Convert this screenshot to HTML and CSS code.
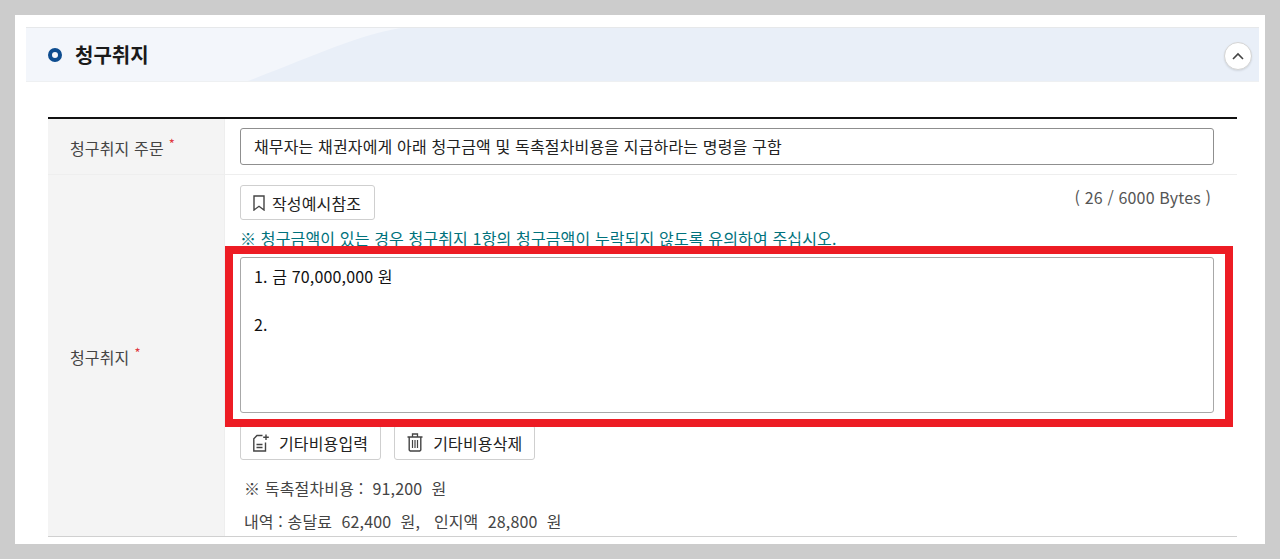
FILE: index.html
```html
<!DOCTYPE html>
<html lang="ko">
<head>
    <meta charset="UTF-8">
    <title>청구취지</title>
    <link rel="stylesheet" href="styles.css">
</head>
<body>
    <main class="card">
        <header class="band">
            <svg class="band-bg" viewBox="0 0 1233 55" preserveAspectRatio="none"><path d="M0 0H375C330 8 290 28 222 55H0Z" fill="#f3f6fb"/></svg>
            <span class="dot"></span>
            <h2>청구취지</h2>
            <button class="fold" aria-label="접기">
                <svg width="14" height="10" viewBox="0 0 14 10"><path d="M2 8L7 3L12 8" fill="none" stroke="#444" stroke-width="1.6"/></svg>
            </button>
        </header>

        <section class="form">
            <div class="row row-first">
                <div class="label">청구취지 주문 <span class="req">*</span></div>
                <div class="field">
                    <div class="input">채무자는 채권자에게 아래 청구금액 및 독촉절차비용을 지급하라는 명령을 구함</div>
                </div>
            </div>
            <div class="row row-main">
                <div class="label">청구취지 <span class="req">*</span></div>
                <div class="field field-main">
                    <div class="top-line">
                        <button class="btn btn-small">
                            <svg width="12" height="16" viewBox="0 0 12 16"><path d="M1 1H11V15L6 11.3L1 15Z" fill="none" stroke="#444" stroke-width="1.4"/></svg>
                            작성예시참조
                        </button>
                        <span class="bytes">( 26 / 6000 Bytes )</span>
                    </div>
                    <p class="notice">※ 청구금액이 있는 경우 청구취지 1항의 청구금액이 누락되지 않도록 유의하여 주십시오.</p>
                    <div class="textarea">
                        <p>1. 금 70,000,000 원</p>
                        <p class="gap">2.</p>
                    </div>
                    <div class="actions">
                        <button class="btn">
                            <svg width="16" height="18" viewBox="0 0 16 18"><path d="M9.5 1.5H4L0.8 4.7V17H12.5V8.5" fill="none" stroke="#444" stroke-width="1.4"/><path d="M13 0.5V6M10.2 3.2H15.8" stroke="#444" stroke-width="1.4"/><path d="M3.5 10.5H9.5M3.5 13.5H9.5" stroke="#444" stroke-width="1.4"/></svg>
                            기타비용입력
                        </button>
                        <button class="btn">
                            <svg width="16" height="19" viewBox="0 0 16 19"><path d="M0.5 4H15.5M5.5 4V1H10.5V4" fill="none" stroke="#444" stroke-width="1.3"/><path d="M2.2 4V17L3.2 18H12.8L13.8 17V4" fill="none" stroke="#444" stroke-width="1.4"/><path d="M5.5 7V15M8 7V15M10.5 7V15" stroke="#444" stroke-width="1.2"/></svg>
                            기타비용삭제
                        </button>
                    </div>
                    <p class="cost">※ 독촉절차비용 :&nbsp; 91,200&nbsp; 원</p>
                    <p class="detail">내역 : 송달료&nbsp; 62,400&nbsp; 원, &nbsp; 인지액&nbsp; 28,800&nbsp; 원</p>
                </div>
            </div>
        </section>

        <div class="highlight"></div>
    </main>
</body>
</html>
```

FILE: styles.css
```css
html, body {
    margin: 0;
    height: 100%;
}
body {
    background-color: #cccccc;
    padding: 15px 15px 15px 15px;
    box-sizing: border-box;
    height: 559px;
    overflow: hidden;
    font-family: "Noto Sans CJK KR", "Noto Sans", sans-serif;
    letter-spacing: 0.15px;
    color: #333;
}
.card {
    position: relative;
    background-color: #fff;
    height: 529px;
    padding: 12px 6px 0 11px;
    box-sizing: border-box;
}
.band {
    position: relative;
    display: flex;
    align-items: center;
    height: 55px;
    background-color: #e9eff8;
    border-top: 1px solid #e6e8ea;
    border-bottom: 1px solid #eef0f2;
    box-sizing: border-box;
    padding-left: 22px;
}
.band-bg {
    position: absolute;
    left: 0;
    top: 0;
    width: 100%;
    height: 100%;
}
.dot {
    position: relative;
    width: 14px;
    height: 14px;
    border: 4px solid #0d4c8f;
    border-radius: 50%;
    box-sizing: border-box;
}
.band h2 {
    position: relative;
    margin: 0 0 0 13px;
    font-size: 20px;
    font-weight: 700;
    letter-spacing: 0;
    color: #1a1a1a;
}
.fold {
    position: absolute;
    right: 7px;
    top: 14px;
    width: 28px;
    height: 28px;
    padding: 0;
    border: 1px solid #d5d5d5;
    border-radius: 50%;
    background-color: #fff;
    box-shadow: 0 1px 2px rgba(0,0,0,0.1);
    display: flex;
    align-items: center;
    justify-content: center;
}
.form {
    margin: 35px 22px 0 22px;
    border-top: 2px solid #111;
    border-bottom: 1px solid #d0d0d0;
}
.row {
    display: flex;
}
.row-first {
    height: 56px;
    border-bottom: 1px solid #eeeeee;
    box-sizing: border-box;
}
.row-main {
    height: 361px;
}
.label {
    width: 177px;
    flex-shrink: 0;
    box-sizing: border-box;
    background-color: #f4f4f4;
    border-right: 1px solid #eeeeee;
    padding-left: 22px;
    padding-top: 2px;
    font-size: 16px;
    color: #444;
    display: flex;
    align-items: center;
    gap: 5px;
}
.req {
    color: #e0393e;
    font-size: 13px;
    position: relative;
    top: -4px;
}
.field {
    flex-grow: 1;
    padding: 9px 23px 0 15px;
}
.input {
    height: 37px;
    box-sizing: border-box;
    border: 1px solid #8f8f8f;
    border-radius: 3px;
    padding: 0 13px;
    line-height: 35px;
    font-size: 16px;
    color: #222;
}
.field-main {
    padding-top: 10px;
}
.top-line {
    display: flex;
    justify-content: space-between;
    align-items: flex-start;
}
.btn {
    display: inline-flex;
    align-items: center;
    gap: 10px;
    height: 35px;
    padding: 0 12px;
    background-color: #fff;
    border: 1px solid #cfcfcf;
    border-radius: 3px;
    font-family: inherit;
    font-size: 16px;
    letter-spacing: 0.15px;
    color: #222;
}
.btn-small {
    gap: 7px;
    padding-right: 13px;
}
.bytes {
    font-size: 16px;
    color: #555;
    margin-right: 3px;
}
.notice {
    margin: 6px 0 0 0;
    font-size: 16px;
    line-height: 24px;
    color: #00727c;
}
.textarea {
    height: 156px;
    margin-top: 7px;
    box-sizing: border-box;
    border: 1px solid #a8a8a8;
    border-radius: 3px;
    padding: 6px 13px;
    font-size: 16px;
    line-height: 24px;
    color: #111;
}
.textarea p {
    margin: 0;
}
.textarea .gap {
    margin-top: 24px;
}
.actions {
    display: flex;
    gap: 13px;
    margin-top: 12px;
}
.cost {
    margin: 16px 0 0 4px;
    font-size: 16px;
    line-height: 24px;
    color: #444;
}
.detail {
    margin: 9px 0 0 4px;
    font-size: 16px;
    line-height: 24px;
    color: #444;
}
.highlight {
    position: absolute;
    left: 210px;
    top: 231px;
    width: 1008px;
    height: 181px;
    box-sizing: border-box;
    border: 8px solid #ed1c24;
}
```
